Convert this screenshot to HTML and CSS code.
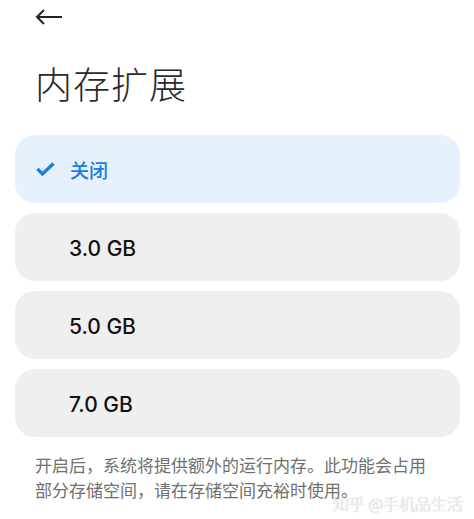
FILE: index.html
```html
<!DOCTYPE html>
<html lang="zh-CN">

<head>
    <meta charset="UTF-8">
    <meta name="viewport" content="width=device-width, initial-scale=1.0">
    <title>内存扩展</title>
    <link rel="stylesheet" href="styles.css">
</head>

<body>
    <div class="page">
        <div class="topbar">
            <svg class="back" width="28" height="16" viewBox="0 0 28 16">
                <path d="M27 8H2M9 1L2 8l7 7" fill="none" stroke="#222" stroke-width="2" />
            </svg>
        </div>

        <h1 class="title">内存扩展</h1>

        <div class="options">
            <div class="option selected">
                <svg class="check" width="19" height="14" viewBox="0 0 19 14">
                    <path d="M1.5 7l5 5L17.5 1.5" fill="none" stroke="#1a7be0" stroke-width="3.2" />
                </svg>
                <span>关闭</span>
            </div>
            <div class="option"><span>3.0 GB</span></div>
            <div class="option"><span>5.0 GB</span></div>
            <div class="option"><span>7.0 GB</span></div>
        </div>

        <p class="note">开启后，系统将提供额外的运行内存。此功能会占用部分存储空间，请在存储空间充裕时使用。</p>

        <div class="watermark">知乎 @手机品生活</div>
    </div>
</body>

</html>
```

FILE: styles.css
```css
body {
    margin: 0;
    background: #fff;
    font-family: Inter, "Noto Sans CJK SC", sans-serif;
}

.page {
    position: relative;
    width: 474px;
    height: 519px;
    overflow: hidden;
}

.topbar {
    height: 34px;
    padding-left: 35px;
    box-sizing: border-box;
    padding-top: 9px;
}

.back {
    display: block;
}

.title {
    margin: 24px 0 0 35px;
    font-family: "Noto Sans CJK SC", sans-serif;
    font-weight: 300;
    font-size: 37px;
    line-height: 50px;
    color: #2a2a2a;
    letter-spacing: 1px;
}

.options {
    display: flex;
    flex-direction: column;
    gap: 10px;
    margin: 27px 14px 0 15px;
}

.option {
    display: flex;
    align-items: center;
    height: 68px;
    border-radius: 20px;
    background: #efefef;
    padding-left: 54px;
    font-size: 21px;
    font-weight: 500;
    color: #111;
}

.option span {
    padding-top: 2px;
}

.option.selected {
    background: #e6f1fe;
    color: #1a7be0;
    padding-left: 21px;
}

.check {
    display: block;
    margin-right: 15px;
}

.selected span {
    font-family: "Noto Sans CJK SC", sans-serif;
    font-size: 19px;
    padding-top: 0;
}

.note {
    margin: 15px 40px 0 35px;
    font-family: "Noto Sans CJK SC", sans-serif;
    font-size: 17px;
    line-height: 25px;
    color: #707070;
}

.watermark {
    position: absolute;
    right: 11px;
    bottom: 8px;
    font-family: "Noto Sans CJK SC", sans-serif;
    font-weight: 300;
    font-size: 16px;
    line-height: 16px;
    color: #f2f2f2;
    text-shadow: 0 0 1px #b0b0b0;
}
```
